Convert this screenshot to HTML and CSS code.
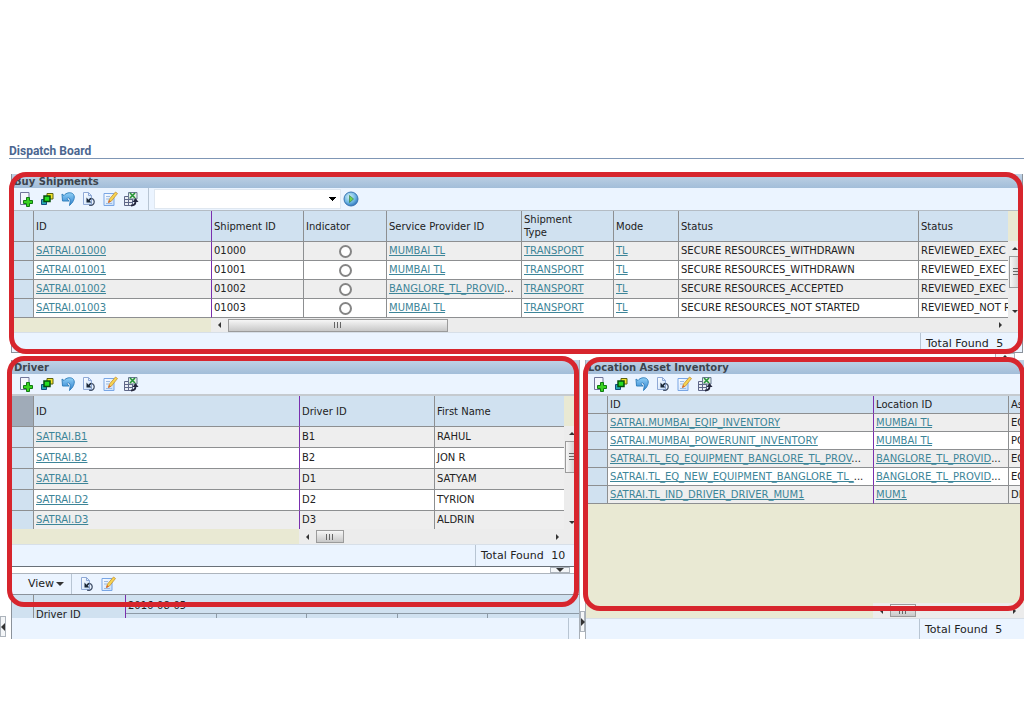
FILE: index.html
```html
<!DOCTYPE html>
<html lang="en">
<head>
<meta charset="utf-8">
<title>Dispatch Board</title>
<link rel="stylesheet" href="styles.css">
</head>
<body>
<svg class="sprite" aria-hidden="true">
  <defs>
    <linearGradient id="sheet" x1="0" y1="0" x2="1" y2="1"><stop offset="0" stop-color="#fff"/><stop offset="1" stop-color="#c3dcfa"/></linearGradient>
    <linearGradient id="arrow" x1="0" y1="0" x2="0" y2="1"><stop offset="0" stop-color="#8fd0f6"/><stop offset="1" stop-color="#2c7fd0"/></linearGradient>
    <radialGradient id="orb" cx=".4" cy=".35" r=".7"><stop offset="0" stop-color="#d6f1fb"/><stop offset=".6" stop-color="#6bb5e2"/><stop offset="1" stop-color="#2a6bb8"/></radialGradient>
  </defs>
  <symbol id="i-add" viewBox="0 0 16 16"><path d="M2.500 1.500h8.500v12H2.500z" fill="#f4f6fc" stroke="#71769a"/><path d="M8.500 6.500h3v3h3v3h-3v3h-3v-3h-3v-3h3z" fill="#39d321" stroke="#107a12"/></symbol>
  <symbol id="i-stack" viewBox="0 0 16 16"><path d="M8 2.500h6v5.500H8z" fill="#f5e32c" stroke="#5a6412"/><path d="M2.500 8.500h5v5h-5z" fill="#28a8b4" stroke="#164b80"/><path d="M5 5h6v5.500H5z" fill="#25dd20" stroke="#064f0b" stroke-width="1.500"/></symbol>
  <symbol id="i-undo" viewBox="0 0 16 16"><path d="M2 3l2 1.500C6 1.800 10 1 12.500 2.500c3 2 2.300 7.500-3 12 .7-4 1.300-6.700-.5-7.500-1-.4-1.500 0-2 .8L9 10l-6.500 0z" fill="url(#arrow)" stroke="#3582bd"/></symbol>
  <symbol id="i-refresh" viewBox="0 0 16 16"><path d="M2.500 1.500h5l3 3v9h-8z" fill="url(#sheet)" stroke="#8fa9d6"/><path d="M7.500 1.500v3h3" fill="none" stroke="#8fa9d6"/><path d="M10.500 7.300a3.600 3.600 0 1 1-2.300 6.800" fill="none" stroke="#46546c" stroke-width="1.300"/><path d="M5.500 6.500v5h5L8.700 9.700l1.800-2-1.200-1-1.800 2z" fill="#192636"/></symbol>
  <symbol id="i-edit" viewBox="0 0 16 16"><path d="M2 2.500h10v12H2z" fill="url(#sheet)" stroke="#79a6e5"/><path d="M4 5.500h4M4 8h3M4 12.500h6" stroke="#9dbbe2"/><path d="M6.500 11.500l1-3.500 6-7 2 1.500-6 7.500z" fill="#f7d451" stroke="#c49235" stroke-width=".8"/><path d="M6 12l1-3 2 1.500z" fill="#db652f"/></symbol>
  <symbol id="i-excel" viewBox="0 0 16 16"><path d="M1.500 5.500h8v9h-8zM1.500 8.500h8M1.500 11.500h8M5.500 6v8" fill="#e9edf5" stroke="#5e6788"/><path d="M5.500 1.500h8.500v6.500H5.500z" fill="#e3efe5" stroke="#697891"/><path d="M7 2l5 5M12 2L7 7" stroke="#239436" stroke-width="1.600"/><path d="M8 14.500c3.500 0 4.500-1.500 4.500-4" fill="none" stroke="#25283e" stroke-width="1.800"/><path d="M9.500 11l3-4 3 4z" fill="#25283e"/></symbol>
  <symbol id="i-go" viewBox="0 0 16 16"><circle cx="8" cy="8" r="7" fill="url(#orb)" stroke="#3975b3"/><path d="M6.500 4.500l4 3.500-4 3.500z" fill="#72d44c" stroke="#3c8b58" stroke-width=".8"/></symbol>
</svg>

<main class="page">
  <h1 class="page-title">Dispatch Board</h1>

  <section class="panel buy" aria-labelledby="t-buy">
    <h2 class="panel-title" id="t-buy">Buy Shipments</h2>
    <div class="toolbar">
      <button class="tool" aria-label="Add"><svg><use href="#i-add"/></svg></button>
      <button class="tool" aria-label="Duplicate"><svg><use href="#i-stack"/></svg></button>
      <button class="tool" aria-label="Undo"><svg><use href="#i-undo"/></svg></button>
      <button class="tool" aria-label="Refresh"><svg><use href="#i-refresh"/></svg></button>
      <button class="tool" aria-label="Edit"><svg><use href="#i-edit"/></svg></button>
      <button class="tool" aria-label="Export"><svg><use href="#i-excel"/></svg></button>
      <span class="divider"></span>
      <select class="action" aria-label="Action"><option></option></select>
      <button class="tool go" aria-label="Run"><svg><use href="#i-go"/></svg></button>
    </div>
    <div class="grid">
      <div class="table-clip">
        <table>
          <colgroup><col class="c-gutter"><col class="c-178"><col class="c-92"><col class="c-83"><col class="c-135"><col class="c-92"><col class="c-65"><col class="c-240"><col></colgroup>
          <thead><tr><th></th><th class="frozen">ID</th><th>Shipment ID</th><th>Indicator</th><th>Service Provider ID</th><th class="wrap">Shipment Type</th><th>Mode</th><th>Status</th><th>Status</th></tr></thead>
          <tbody>
            <tr><td></td><td class="frozen"><a href="#">SATRAI.01000</a></td><td>01000</td><td class="mid"><input type="radio" name="ind" aria-label="01000"></td><td><a href="#">MUMBAI TL</a></td><td><a href="#">TRANSPORT</a></td><td><a href="#">TL</a></td><td>SECURE RESOURCES_WITHDRAWN</td><td>REVIEWED_EXEC</td></tr>
            <tr><td></td><td class="frozen"><a href="#">SATRAI.01001</a></td><td>01001</td><td class="mid"><input type="radio" name="ind" aria-label="01001"></td><td><a href="#">MUMBAI TL</a></td><td><a href="#">TRANSPORT</a></td><td><a href="#">TL</a></td><td>SECURE RESOURCES_WITHDRAWN</td><td>REVIEWED_EXEC</td></tr>
            <tr><td></td><td class="frozen"><a href="#">SATRAI.01002</a></td><td>01002</td><td class="mid"><input type="radio" name="ind" aria-label="01002"></td><td><a href="#">BANGLORE_TL_PROVID</a>...</td><td><a href="#">TRANSPORT</a></td><td><a href="#">TL</a></td><td>SECURE RESOURCES_ACCEPTED</td><td>REVIEWED_EXEC</td></tr>
            <tr><td></td><td class="frozen"><a href="#">SATRAI.01003</a></td><td>01003</td><td class="mid"><input type="radio" name="ind" aria-label="01003"></td><td><a href="#">MUMBAI TL</a></td><td><a href="#">TRANSPORT</a></td><td><a href="#">TL</a></td><td>SECURE RESOURCES_NOT STARTED</td><td>REVIEWED_NOT R</td></tr>
          </tbody>
        </table>
      </div>
      <div class="vscroll"><span class="tri up"></span><span class="thumb"></span><span class="spacer"></span><span class="tri down"></span></div>
    </div>
    <div class="hscroll"><span class="frozen-pad"></span><span class="tri left"></span><span class="thumb"></span><span class="spacer"></span><span class="tri right"></span><span class="corner"></span></div>
    <div class="footer"><div class="total">Total Found <b>5</b></div></div>
    <div class="callout"></div>
  </section>

  <div class="split">
    <button class="handle top" aria-label="Collapse upper pane"><span class="tri up"></span></button>
  </div>

  <div class="lower">
    <div class="edge"><button class="handle side" aria-label="Collapse left"><span class="tri left"></span></button></div>
    <div class="left">
      <div class="marked">
        <section class="panel driver" aria-labelledby="t-driver">
          <h2 class="panel-title" id="t-driver">Driver</h2>
          <div class="toolbar">
            <button class="tool" aria-label="Add"><svg><use href="#i-add"/></svg></button>
            <button class="tool" aria-label="Duplicate"><svg><use href="#i-stack"/></svg></button>
            <button class="tool" aria-label="Undo"><svg><use href="#i-undo"/></svg></button>
            <button class="tool" aria-label="Refresh"><svg><use href="#i-refresh"/></svg></button>
            <button class="tool" aria-label="Edit"><svg><use href="#i-edit"/></svg></button>
            <button class="tool" aria-label="Export"><svg><use href="#i-excel"/></svg></button>
          </div>
          <div class="grid">
            <div class="table-clip">
              <table>
                <colgroup><col class="c-gutter"><col class="c-266"><col class="c-135"><col></colgroup>
                <thead><tr><th></th><th class="frozen">ID</th><th>Driver ID</th><th>First Name</th></tr></thead>
                <tbody>
                  <tr><td></td><td class="frozen"><a href="#">SATRAI.B1</a></td><td>B1</td><td>RAHUL</td></tr>
                  <tr><td></td><td class="frozen"><a href="#">SATRAI.B2</a></td><td>B2</td><td>JON R</td></tr>
                  <tr><td></td><td class="frozen"><a href="#">SATRAI.D1</a></td><td>D1</td><td>SATYAM</td></tr>
                  <tr><td></td><td class="frozen"><a href="#">SATRAI.D2</a></td><td>D2</td><td>TYRION</td></tr>
                  <tr><td></td><td class="frozen"><a href="#">SATRAI.D3</a></td><td>D3</td><td>ALDRIN</td></tr>
                </tbody>
              </table>
            </div>
            <div class="vscroll"><span class="tri up"></span><span class="thumb"></span><span class="spacer"></span><span class="tri down"></span></div>
          </div>
          <div class="hscroll"><span class="frozen-pad"></span><span class="tri left"></span><span class="thumb"></span><span class="spacer"></span><span class="tri right"></span><span class="corner"></span></div>
          <div class="footer"><div class="total">Total Found <b>10</b></div></div>
        </section>
        <div class="split inner"><button class="handle top" aria-label="Collapse lower pane"><span class="tri down"></span></button></div>
        <div class="toolbar view">
          <button class="menu">View <span class="tri down"></span></button>
          <span class="divider"></span>
          <button class="tool" aria-label="Refresh"><svg><use href="#i-refresh"/></svg></button>
          <button class="tool" aria-label="Edit"><svg><use href="#i-edit"/></svg></button>
        </div>
        <div class="callout"></div>
      </div>
      <div class="gantt-head">
        <div class="gantt-gutter"></div>
        <div class="gantt-name">Driver ID</div>
        <div class="gantt-time"><div class="date">2016-08-05</div><div class="ticks"><i></i><i></i><i></i><i></i><i></i></div></div>
      </div>
      <div class="gantt-body"><span></span></div>
    </div>
    <div class="edge mid-edge"><button class="handle side" aria-label="Collapse right"><span class="tri right"></span></button></div>
    <section class="panel asset" aria-labelledby="t-asset">
      <h2 class="panel-title" id="t-asset">Location Asset Inventory</h2>
      <div class="toolbar">
        <button class="tool" aria-label="Add"><svg><use href="#i-add"/></svg></button>
        <button class="tool" aria-label="Duplicate"><svg><use href="#i-stack"/></svg></button>
        <button class="tool" aria-label="Undo"><svg><use href="#i-undo"/></svg></button>
        <button class="tool" aria-label="Refresh"><svg><use href="#i-refresh"/></svg></button>
        <button class="tool" aria-label="Edit"><svg><use href="#i-edit"/></svg></button>
        <button class="tool" aria-label="Export"><svg><use href="#i-excel"/></svg></button>
      </div>
      <div class="grid">
        <div class="table-clip">
          <table>
            <colgroup><col class="c-gutter"><col class="c-266"><col class="c-135"><col></colgroup>
            <thead><tr><th></th><th class="frozen">ID</th><th>Location ID</th><th>As</th></tr></thead>
            <tbody>
              <tr><td></td><td class="frozen"><a href="#">SATRAI.MUMBAI_EQIP_INVENTORY</a></td><td><a href="#">MUMBAI TL</a></td><td>EQ</td></tr>
              <tr><td></td><td class="frozen"><a href="#">SATRAI.MUMBAI_POWERUNIT_INVENTORY</a></td><td><a href="#">MUMBAI TL</a></td><td>PO</td></tr>
              <tr><td></td><td class="frozen"><a href="#">SATRAI.TL_EQ_EQUIPMENT_BANGLORE_TL_PROV</a>...</td><td><a href="#">BANGLORE_TL_PROVID</a>...</td><td>EQ</td></tr>
              <tr><td></td><td class="frozen"><a href="#">SATRAI.TL_EQ_NEW_EQUIPMENT_BANGLORE_TL_</a>...</td><td><a href="#">BANGLORE_TL_PROVID</a>...</td><td>EQ</td></tr>
              <tr><td></td><td class="frozen"><a href="#">SATRAI.TL_IND_DRIVER_DRIVER_MUM1</a></td><td><a href="#">MUM1</a></td><td>DR</td></tr>
            </tbody>
          </table>
        </div>
      </div>
      <div class="hscroll"><span class="frozen-pad"></span><span class="tri left"></span><span class="thumb"></span><span class="spacer"></span><span class="tri right"></span></div>
      <div class="footer"><div class="total">Total Found <b>5</b></div></div>
      <div class="callout"></div>
    </section>
  </div>
</main>
</body>
</html>
```
FILE: styles.css
```css
* { box-sizing: border-box; }

body {
  margin: 0;
  background: #fff;
  color: #222;
  font: 11px/14px "DejaVu Sans", Verdana, sans-serif;
}

button, select, input { font: inherit; margin: 0; }
.sprite { position: absolute; width: 0; height: 0; }

.page { padding-top: 144px; overflow: hidden; }

.page-title {
  margin: 0 0 15px 9px;
  border-bottom: 1px solid #7f96b5;
  color: #4b6690;
  font: bold 12px/14px Roboto, Arial, sans-serif;
}

/* Panels */
.panel { position: relative; }
.buy { margin-left: 11px; margin-right: 1px; border: 1px solid #8b929b; border-width: 0 1px 1px; }

.panel-title {
  margin: 0;
  padding: 1px 2px 0;
  height: 14px;
  overflow: hidden;
  background: linear-gradient(#c0d2e5, #a2bdd9);
  color: #3c444d;
  font-size: 10px;
  line-height: 14px;
  white-space: nowrap;
}

.toolbar {
  display: flex;
  align-items: center;
  gap: 5px;
  height: 20px;
  padding-left: 6px;
  background: #ebf4ff;
}
.buy .toolbar { height: 22px; }

.tool { width: 16px; height: 16px; padding: 0; border: 0; background: none; }
.tool svg { display: block; width: 16px; height: 16px; }
.divider { align-self: stretch; width: 1px; margin-left: 4px; background: #b8c5d3; }

.action {
  appearance: none;
  width: 187px;
  height: 20px;
  border: 1px solid #dfe7f0;
  border-radius: 0;
  background-color: #fff;
  background-image: linear-gradient(225deg, transparent 50%, #000 50%), linear-gradient(135deg, transparent 50%, #000 50%);
  background-image: linear-gradient(135deg, #000 50%, transparent 50%), linear-gradient(225deg, #000 50%, transparent 50%);
  background-size: 4px 4px;
  background-position: right 3px center, right 7px center;
  background-repeat: no-repeat;
}
.go { margin-left: -3px; }

/* Grids */
.grid { display: flex; border-top: 1px solid #b4bcc4; background: #e9e9d3; }
.table-clip { flex: 1; min-width: 0; overflow: hidden; }
table { width: 100%; table-layout: fixed; border-collapse: separate; border-spacing: 0; }
.c-gutter { width: 22px; }
.c-65 { width: 65px; }
.c-83 { width: 83px; }
.c-92 { width: 92px; }
.c-135 { width: 135px; }
.c-178 { width: 178px; }
.c-240 { width: 240px; }
.c-266 { width: 266px; }

th, td {
  padding: 0 2px;
  border-right: 1px solid #8d8f91;
  border-bottom: 1px solid #8d8f91;
  overflow: hidden;
  font-weight: normal;
  font-size: 10px;
  text-align: left;
  white-space: nowrap;
}
th { height: 31px; background: #d0e1f0; line-height: 13px; }
th.wrap { white-space: normal; padding-right: 30px; }
th:last-child, td:last-child { border-right: 0; }
tbody tr { background: #eee; }
tbody tr:nth-child(even) { background: #fff; }
tbody td:first-child { background: #d0e1f0; }
th.frozen, td.frozen { border-right: 1px solid #7a2fae; }
.buy td { height: 19px; }
.driver td { height: 21px; }
.driver th:first-child { background: #a0abb8; }
.driver tr:last-child td { height: 18px; border-bottom: 0; }
.asset th, .asset td { height: 18px; }
td.mid { text-align: center; line-height: 12px; }

a { color: #3d8598; text-decoration: underline; text-decoration-skip-ink: none; }

input[type="radio"] {
  appearance: none;
  display: block;
  width: 13px;
  height: 13px;
  margin: 0 auto;
  border: 2px solid #858585;
  border-radius: 50%;
  background: #fff;
}

/* Scrollbars */
.tri { display: block; flex: none; border: 3px solid transparent; width: 0; height: 0; }
.tri.up { border-top: 0; border-bottom-color: #333; }
.tri.down { border-bottom: 0; border-top-color: #333; }
.tri.left { border-left: 0; border-right-color: #333; }
.tri.right { border-right: 0; border-left-color: #333; }
.spacer { flex: 1; }

.vscroll {
  display: flex;
  flex-direction: column;
  align-items: center;
  width: 14px;
  margin-top: 30px;
  padding: 6px 0 5px;
  background: #ececec;
}
.vscroll .thumb {
  width: 13px;
  height: 32px;
  margin-top: 6px;
  border: 1px solid #9b9b9b;
  background: repeating-linear-gradient(#666 0 1px, transparent 1px 3px) center / 5px 8px no-repeat, linear-gradient(90deg, #f6f6f6, #c8c8c8);
}

.hscroll { display: flex; align-items: center; height: 15px; background: #ececec; }
.frozen-pad { align-self: stretch; flex: none; width: 287px; background: #e9e9d3; }
.hscroll .tri.left { margin: 0 7px; }
.hscroll .thumb {
  width: 28px;
  height: 13px;
  border: 1px solid #9b9b9b;
  background: repeating-linear-gradient(90deg, #666 0 1px, transparent 1px 3px) center / 8px 6px no-repeat, linear-gradient(#f6f6f6, #c8c8c8);
}
.corner { width: 20px; }
.buy .hscroll { height: 14px; }
.buy .frozen-pad { width: 199px; }
.buy .hscroll .thumb { width: 220px; }

.footer { display: flex; justify-content: flex-end; height: 21px; border-top: 1px solid #d7dfe8; background: #ebf4ff; }
.buy .footer { height: 20px; }
.total { width: 102px; padding: 4px 0 0 5px; border-left: 1px solid #b8c5d3; white-space: nowrap; }
.total b { margin-left: 4px; font-weight: normal; }

/* Highlight frames drawn over the panels */
.callout { position: absolute; border: 5px solid #d7252d; border-radius: 17px; pointer-events: none; }
.buy > .callout { inset: -2px -1px -2px -3px; }
.marked > .callout { inset: -4px 0 -12px -5px; }
.asset > .callout { inset: -3px -1px 28px -3px; }

/* Splitters */
.split { display: flex; justify-content: flex-end; height: 7px; padding-right: 9px; }
.handle { display: flex; align-items: center; justify-content: center; padding: 0; border: 1px solid #adb4bc; background: #f4f6f8; }
.handle .tri { border-width: 4px; }
.handle .tri.up { border-top: 0; }
.handle .tri.down { border-bottom: 0; }
.handle .tri.left { border-left: 0; }
.handle .tri.right { border-right: 0; }
.handle.top { width: 20px; height: 7px; }
.handle.side { width: 100%; height: 21px; }

.lower { display: grid; grid-template-columns: 11px 568fr 7px 438fr; }
.edge { display: flex; align-items: flex-end; padding: 0 5px 2px 0; }
.mid-edge { padding: 0 0 7px; border-left: 1px solid #a8afb7; border-right: 1px solid #a8afb7; }

.left { min-width: 0; border-left: 1px solid #8b929b; }
.marked { position: relative; }
.driver .grid, .asset .grid { border-top: 2px solid #c5cacf; }
.driver .vscroll { width: 15px; }
.driver .total { width: 104px; }
.driver .footer { height: 23px; border-bottom: 1px solid #697078; }
.split.inner { height: 6px; background: #fff; }
.split.inner .handle { height: 6px; }
.toolbar.view { height: 22px; border-top: 1px solid #adb4bc; border-bottom: 1px solid #8b929b; padding-left: 14px; }
.toolbar.view .divider { margin: 0 2px 0 0; }
.menu { display: flex; align-items: center; gap: 2px; padding: 0 2px; border: 0; background: none; color: #222; font-size: 11px; }
.menu .tri.down { border-width: 4px 4px 0; }

/* Timeline */
.gantt-head { display: flex; height: 23px; overflow: hidden; background: #d0e1f0; white-space: nowrap; font-size: 10px; }
.gantt-gutter { width: 22px; border-right: 1px solid #8d8f91; }
.gantt-name { width: 92px; padding: 13px 2px 0; border-right: 1px solid #7a2fae; }
.gantt-time { flex: 1; padding-top: 4px; }
.date { height: 15px; padding-left: 2px; border-bottom: 1px solid #8d9aa6; }
.ticks { display: grid; grid-template-columns: repeat(5, 1fr); height: 4px; }
.ticks i { border-right: 1px solid #8d9aa6; }
.ticks i:last-child { border: 0; }
.gantt-body { display: flex; justify-content: flex-end; height: 21px; padding-right: 10px; background: #ebf4ff; }
.gantt-body span { width: 1px; background: #b8c5d3; }

/* Asset inventory */
.asset { display: flex; flex-direction: column; min-width: 0; }
.asset .grid { flex: 1; align-items: flex-start; }
.asset .total { width: 105px; }
.asset .hscroll { padding-right: 8px; }
.asset .hscroll .thumb { width: 26px; }
```
